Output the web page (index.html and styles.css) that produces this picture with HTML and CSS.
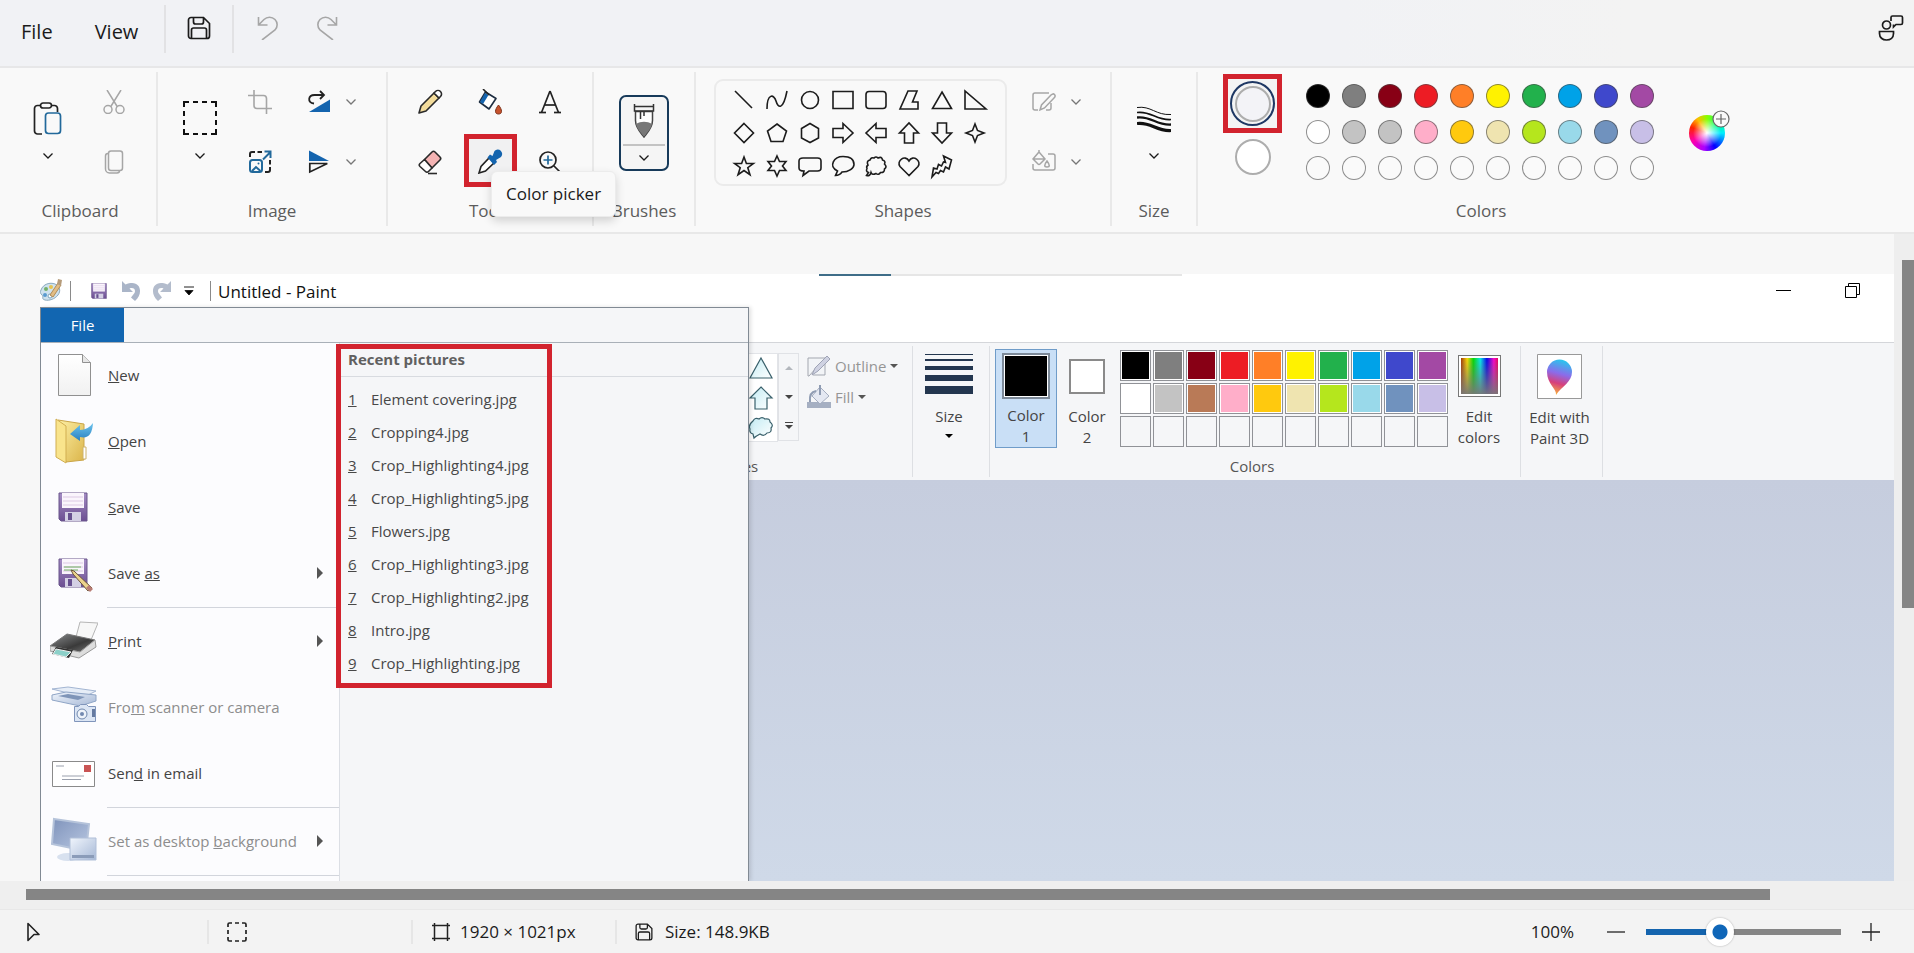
FILE: index.html
```html
<!DOCTYPE html>
<html lang="en">
<head>
<meta charset="utf-8">
<title>Paint</title>
<meta name="viewport" content="width=device-width, initial-scale=1">
<link rel="stylesheet" href="styles.css">
</head>
<body>
<svg class="defs" aria-hidden="true">
  <defs>
    <symbol id="chev" viewBox="0 0 12 8"><path d="M1.5 1.5 6 6l4.5-4.5" fill="none" stroke="currentColor" stroke-width="1.3"/></symbol>
    <symbol id="floppy" viewBox="0 0 24 24"><path d="M4 1.500h12.500L22.500 7.500V20a2.500 2.500 0 0 1-2.500 2.500H4A2.500 2.500 0 0 1 1.500 20V4A2.500 2.500 0 0 1 4 1.500zM6.500 2v4a2 2 0 0 0 2 2h6a2 2 0 0 0 2-2V2M4.500 22v-8a2 2 0 0 1 2-2h11a2 2 0 0 1 2 2v8" fill="none" stroke="currentColor" stroke-width="1.700"/></symbol>
    <linearGradient id="aqua" x1="0" y1="0" x2="1" y2="1"><stop offset="0" stop-color="#c2ebf3"/><stop offset="1" stop-color="#fff"/></linearGradient>
    <linearGradient id="paper" x1="0" y1="0" x2="0" y2="1"><stop offset="0" stop-color="#fff"/><stop offset="1" stop-color="#f1f1f1"/></linearGradient>
    <linearGradient id="gold" x1="0" y1="0" x2="1" y2="1"><stop offset="0" stop-color="#fdf0a6"/><stop offset="1" stop-color="#dbb54a"/></linearGradient>
    <linearGradient id="ink" x1="0" y1="0" x2="1" y2="1"><stop offset="0" stop-color="#8a8c8e"/><stop offset=".6" stop-color="#3a3a3a"/><stop offset="1" stop-color="#777"/></linearGradient>
    <linearGradient id="frost" x1="0" y1="0" x2="1" y2="1"><stop offset="0" stop-color="#f0f5fc"/><stop offset="1" stop-color="#a6b8d6"/></linearGradient>
    <linearGradient id="screen" x1="0" y1="0" x2="1" y2="1"><stop offset="0" stop-color="#7f93bb"/><stop offset="1" stop-color="#b9c8e2"/></linearGradient>
    <linearGradient id="disk" x1="0" y1="0" x2="0" y2="1"><stop offset="0" stop-color="#a48cc4"/><stop offset="1" stop-color="#6c4f92"/></linearGradient>
    <linearGradient id="sky" x1="0" y1="0" x2="0" y2="1"><stop offset="0" stop-color="#6cc4ee"/><stop offset="1" stop-color="#2a7fc0"/></linearGradient>
    <linearGradient id="balloon" x1=".6" y1="0" x2=".4" y2="1"><stop offset="0" stop-color="#25c8ee"/><stop offset=".4" stop-color="#8b6cea"/><stop offset=".68" stop-color="#d6407c"/><stop offset="1" stop-color="#f8b43c"/></linearGradient>
    <symbol id="disk-art" viewBox="0 0 30 30"><path d="M1 1h28v28H3l-2-2z" fill="url(#disk)" stroke="#6b568c"/><path d="M4 1h22v15H4z" fill="#faf5fc"/><path d="M5 5h20M5 9h20M5 13h20" stroke="#dcc9e4"/><path d="M7 20h16v9H7z" fill="#d4d0e4"/><path d="M10 21h4v7h-4z" fill="#67508f"/></symbol>
  </defs>
</svg>
<div class="app">
  <header class="titlebar">
    <nav class="menus"><button>File</button><button>View</button></nav>
    <div class="quick">
      <button aria-label="Save"><svg class="i24" viewBox="0 0 24 24"><use href="#floppy"/></svg></button>
      <button class="faint wide" aria-label="Undo"><svg class="i24" viewBox="0 0 24 24"><path d="M2.500 1v8h9M2.500 9l5.500-5.500a7.800 7.800 0 0 1 11 0 7.500 7.500 0 0 1 0 10.500L6 24" fill="none" stroke="currentColor" stroke-width="1.600"/></svg></button>
      <button class="faint" aria-label="Redo"><svg class="i24" viewBox="0 0 24 24"><path d="M21.500 1v8h-9M21.500 9 16 3.500a7.800 7.800 0 0 0-11 0A7.500 7.500 0 0 0 5 14L18 24" fill="none" stroke="currentColor" stroke-width="1.600"/></svg></button>
    </div>
    <button class="feedback" aria-label="Feedback"><svg class="i26" viewBox="0 0 26 26" fill="none" stroke="currentColor" stroke-width="1.700"><circle cx="8.500" cy="10" r="4"/><path d="M1.500 16.500h14v2c0 4-3 6.500-7 6.500s-7-2.500-7-6.500zM13 6V2.500Q13 1 14.500 1H23q1.500 0 1.500 1.500V8q0 1.500-1.500 1.500h-5L15.500 12V9.500"/></svg></button>
  </header>

  <section class="ribbon">
    <div class="group g-clip">
      <div class="tools">
        <button class="big" aria-label="Paste"><svg class="i34" viewBox="0 0 34 34" fill="none" stroke="#222" stroke-width="1.700"><path d="M11 33H6.500A3 3 0 0 1 3.500 30V7.500a3 3 0 0 1 3-3H10M20 4.500h3.500a3 3 0 0 1 3 3V11"/><rect x="9.500" y="2" width="11" height="5" rx="2.500"/><rect x="14.500" y="12" width="15" height="20.500" rx="3" stroke="#22699b"/></svg><svg class="chev"><use href="#chev"/></svg></button>
        <div class="stack">
          <button class="faint" aria-label="Cut"><svg class="i24" viewBox="0 0 24 24" fill="none" stroke="currentColor" stroke-width="1.500"><path d="M5 0 15.500 17M19 0 8.500 17"/><circle cx="6" cy="19.500" r="4"/><circle cx="18" cy="19.500" r="4"/></svg></button>
          <button class="faint" aria-label="Copy"><svg class="i24" viewBox="0 0 24 24" fill="none" stroke="currentColor" stroke-width="1.500"><rect x="6.500" y="1" width="14" height="19.500" rx="2.500"/><path d="M6 3.500q-2.500 0-2.500 2.500v13a4 4 0 0 0 4 4H15q2.500 0 2.500-2.500"/></svg></button>
        </div>
      </div>
      <p class="label">Clipboard</p>
    </div>
    <div class="group g-image">
      <div class="tools">
        <button class="big" aria-label="Select"><svg class="i34" viewBox="0 0 34 34" fill="none" stroke="#111" stroke-width="2"><path d="M1 6V1h5M10 1h5M19 1h5M28 1h5v5M33 10v5M33 19v5M33 28v5h-5M24 33h-5M15 33h-5M6 33H1v-5M1 24v-5M1 15v-5"/></svg><svg class="chev"><use href="#chev"/></svg></button>
        <div class="stack">
          <button class="faint" aria-label="Crop"><svg class="i24" viewBox="0 0 24 24" fill="none" stroke="currentColor" stroke-width="1.600"><path d="M6 0v15.500q0 3 3 3H24M0 5.500h15.500q3 0 3 3V24"/></svg></button>
          <button aria-label="Resize"><svg class="i24" viewBox="0 0 24 24" fill="none" stroke="#222" stroke-width="2"><path d="M2 7V4q0-2 2-2h3M9.500 2H14M22 10v4.500M22 17v3q0 2-2 2h-3"/><g stroke="#22699b"><rect x="2" y="10" width="12" height="12" rx="2.500"/><path d="m4 21 4-4 4.500 4M15 9.500l7-7M16.500 1.500H22.500V8" /></g><circle cx="10.500" cy="13.500" r="1" fill="#22699b" stroke="none"/></svg></button>
        </div>
        <div class="stack pairs">
          <button aria-label="Rotate"><svg class="i24" viewBox="0 0 24 24"><path d="M7 13.500C0 12.500 1 5 7.500 5H17M13 1l4 4-4 4" fill="none" stroke="#222" stroke-width="1.800"/><path d="M23 9.500v12.500H2z" fill="#1464ae"/></svg><svg class="chev pale"><use href="#chev"/></svg></button>
          <button aria-label="Flip"><svg class="i24" viewBox="0 0 24 24"><path d="M2 .5v10.500h20z" fill="#1464ae"/><path d="M2.800 13.500h17.500L2.800 22z" fill="none" stroke="#222" stroke-width="1.700"/></svg><svg class="chev pale"><use href="#chev"/></svg></button>
        </div>
      </div>
      <p class="label">Image</p>
    </div>
    <div class="group g-tools">
      <div class="tools tool-grid">
        <button aria-label="Pencil"><svg class="i26" viewBox="0 0 26 26" stroke="#2a2a2a" stroke-width="1.600" stroke-linejoin="round"><path d="m2 24 2-7L17 4l5 5L9 22z" fill="#f3dc9b"/><path d="m17 4 1.500-1.500a3.500 3.500 0 0 1 5 5L22 9z" fill="#fff"/></svg></button>
        <button aria-label="Fill"><svg class="i26" viewBox="0 0 26 26" stroke-linejoin="round"><path d="M8.500 3 19 9.500 12 20l-9.500-7z" fill="#fff" stroke="#1d2d40" stroke-width="1.600"/><path d="m8 4-5 9 3 2 5.500-9z" fill="#1464ae"/><path d="M6 0 12 6" stroke="#222" stroke-width="1.600"/><path d="M21.500 16c4 5 4 9 0 9s-4-4 0-9z" fill="#c7532d" stroke="#7c3018"/></svg></button>
        <button aria-label="Text"><svg class="i24" viewBox="0 0 24 24" stroke="#222" stroke-width="1.700"><line x1="12" y1="1" x2="3.500" y2="22.500"/><line x1="12" y1="1" x2="20.500" y2="22.500"/><line x1="6.500" y1="15" x2="17.500" y2="15"/><line x1="1" y1="22.500" x2="8" y2="22.500"/><line x1="16" y1="22.500" x2="23" y2="22.500"/></svg></button>
        <button aria-label="Eraser"><svg class="i26" viewBox="0 0 26 26" stroke="#2a2a2a" stroke-width="1.600" stroke-linejoin="round"><path d="M7.500 10.500 15 3q1.500-1.500 3 0l5 5q1.500 1.500 0 3l-8 8z" fill="#f4b3b3"/><path d="m7.500 10.500 7.500 8.500-3.500 3.500q-1.500 1.500-3 0l-5.500-5q-1.500-1.500 0-3z" fill="#fff"/><path d="M11 24.500h9"/></svg></button>
        <button class="picked" aria-label="Color picker" aria-describedby="tip"><svg class="i26" viewBox="0 0 26 26"><path d="m13 9 5 5-9.500 9L2 25l2-6.500z" fill="#fff" stroke="#222" stroke-width="1.600"/><path d="m10.500 9.500 2.500-3 2.500 1.500 2-5A4.300 4.300 0 0 1 24 9l-5 3 1 2-3 3z" fill="#1464ae"/></svg></button>
        <button aria-label="Magnifier"><svg class="i24" viewBox="0 0 24 24" fill="none" stroke="#222" stroke-width="1.700"><circle cx="10" cy="10" r="8"/><path d="m16 16 6.500 6.500"/><path d="M10 5.500v9M5.500 10h9" stroke="#22699b"/></svg></button>
      </div>
      <p class="label">Tools</p>
      <div class="tip" id="tip" role="tooltip">Color picker</div>
    </div>
    <div class="group g-brush">
      <div class="tools">
        <button class="brush" aria-label="Brushes"><svg class="brush-art" viewBox="0 0 22 34"><path d="M2.500 7.500v9C2.500 24 8 29 11 33c3-4 8.500-9 8.500-16.500v-9z" fill="#fff" stroke="#444" stroke-width="1.500"/><path d="M3 20c5-3 11-3 16 0-1 5-5 9-8 12.500C8 29 4 25 3 20z" fill="#777"/><path d="M1.500 0v7h19V0M1.500 2.500h19M7.500 8v7M11 8v4" fill="none" stroke="#333" stroke-width="1.500"/></svg><span class="rule"></span><svg class="chev"><use href="#chev"/></svg></button>
      </div>
      <p class="label">Brushes</p>
    </div>
    <div class="group g-shapes">
      <div class="tools">
        <div class="shapes">
          <button aria-label="Line"><svg viewBox="0 0 22 22"><path d="m2 2 17 17"/></svg></button>
          <button aria-label="Curve"><svg viewBox="0 0 22 22"><path d="M1 20C1 4 8 5 10 12s7 10 11-10"/></svg></button>
          <button aria-label="Oval"><svg viewBox="0 0 22 22"><circle cx="11" cy="11" r="8.500"/></svg></button>
          <button aria-label="Rectangle"><svg viewBox="0 0 22 22"><path d="M1 2.500h20v17H1z"/></svg></button>
          <button aria-label="Rounded rectangle"><svg viewBox="0 0 22 22"><rect x="1" y="2.500" width="20" height="17" rx="3"/></svg></button>
          <button aria-label="Polygon"><svg viewBox="0 0 22 22"><path d="M10 2h9l-4.500 11H20v7H2z"/></svg></button>
          <button aria-label="Triangle"><svg viewBox="0 0 22 22"><path d="m11 3 9.500 16.500h-19z"/></svg></button>
          <button aria-label="Right triangle"><svg viewBox="0 0 22 22"><path d="M1 2v18h21z"/></svg></button>
          <button aria-label="Diamond"><svg viewBox="0 0 22 22"><path d="m11 1.500 9.500 9.500-9.500 9.500L1.500 11z"/></svg></button>
          <button aria-label="Pentagon"><svg viewBox="0 0 22 22"><path d="m11 2 9.500 7L17 19.500H5L1.500 9z"/></svg></button>
          <button aria-label="Hexagon"><svg viewBox="0 0 22 22"><path d="m11 1.500 8.500 5v9.500L11 20.500 2.500 16V6.500z"/></svg></button>
          <button aria-label="Right arrow"><svg viewBox="0 0 22 22"><path d="M1 6.500h10v-5L21 11l-10 9.500v-5H1z"/></svg></button>
          <button aria-label="Left arrow"><svg viewBox="0 0 22 22"><path d="M21 6.500H11v-5L1 11l10 9.500v-5h10z"/></svg></button>
          <button aria-label="Up arrow"><svg viewBox="0 0 22 22"><path d="M6.500 21V11h-5L11 1l9.500 10h-5v10z"/></svg></button>
          <button aria-label="Down arrow"><svg viewBox="0 0 22 22"><path d="M6.500 1v10h-5L11 21l9.500-10h-5V1z"/></svg></button>
          <button aria-label="Four-point star"><svg viewBox="0 0 22 22"><path d="m11 2 2.500 6.500L20 11l-6.500 2.500L11 20l-2.500-6.500L2 11l6.500-2.500z"/></svg></button>
          <button aria-label="Five-point star"><svg viewBox="0 0 22 22"><path d="m11 2 2.400 6.500h7l-5.600 4.200 2.200 7L11 15.500l-6 4.200 2.200-7L1.600 8.500h7z"/></svg></button>
          <button aria-label="Six-point star"><svg viewBox="0 0 22 22"><path d="m11 1 2.500 5.500h6.500L16.500 11l3.500 4.500h-6.500L11 21l-2.500-5.500H2L5.500 11 2 6.500h6.500z"/></svg></button>
          <button aria-label="Rounded callout"><svg viewBox="0 0 22 22"><path d="M4 3h14.500Q22 3 22 6v7q0 3-3.500 3H10l-6 4.500 1-4.500Q0 16 0 13V6q0-3 4-3z"/></svg></button>
          <button aria-label="Oval callout"><svg viewBox="0 0 22 22"><path d="M5.500 16C-4 11 2 1.500 11 1.500S22 6 22 9.500 17 17 10 17q-2.500 3.500-6.500 3.500z"/></svg></button>
          <button aria-label="Cloud callout"><svg viewBox="0 0 22 22"><path d="M5 5q1-3 4-2 2-2 4 0 4-2 4.500 2 3.500 1 2 4 3 3 0 5 0 4-4 3.500-2 3-4.500 1-4 2-5-1-1 4-4.500 3l2-3q-3-1-1.500-4-1-2 1-3.500Q1 6 5 5z"/></svg></button>
          <button aria-label="Heart"><svg viewBox="0 0 22 22"><path d="M11 20.500 2 11.500C-2 6 7-1 11 6c4-7 13 0 9 5.500z"/></svg></button>
          <button aria-label="Lightning"><svg viewBox="0 0 22 22"><path d="m12.500 1 8 4-2.500 9-3.500-2-2 5-3-1.500-2 3-2.500-1L1 22l1.500-9 3.500 1 1.500-4.500 3 1.500L12.500 7l2 .5z"/></svg></button>
        </div>
        <div class="stack pairs faint">
          <button aria-label="Shape outline"><svg class="i24" viewBox="0 0 24 24" fill="none" stroke="currentColor" stroke-width="1.500"><path d="M17 3H3Q1 3 1 5v13q0 2 2 2h3M19 13v5q0 2-2 2h-3M8 20l1.500-5L19 5q2-2 3.500-.5T22 8l-9.500 10z"/></svg><svg class="chev pale"><use href="#chev"/></svg></button>
          <button aria-label="Shape fill"><svg class="i24" viewBox="0 0 24 24" fill="none" stroke="currentColor" stroke-width="1.500"><path d="M16 4h5q2 0 2 2v12q0 2-2 2H3q-2 0-2-2v-4M7 2l6 7-5 5q-1 1-2 0L1 9zM1.500 9H13M7 2V0"/><path d="M15 11c3 4 3 6 0 6s-3-2 0-6z"/></svg><svg class="chev pale"><use href="#chev"/></svg></button>
        </div>
      </div>
      <p class="label">Shapes</p>
    </div>
    <div class="group g-size">
      <div class="tools"><button class="big" aria-label="Size"><svg class="i34" viewBox="0 0 34 34" fill="none" stroke="#111"><path d="M0 6.500c14-2 19 8 34 7" stroke-width="1"/><path d="M0 11.500c14-2 19 8 34 7" stroke-width="1.700"/><path d="M0 16.500c14-2 19 8 34 7" stroke-width="2.300"/><path d="M0 22.500c14-2 19 8 34 7" stroke-width="3.200"/></svg><svg class="chev"><use href="#chev"/></svg></button></div>
      <p class="label">Size</p>
    </div>
    <div class="group g-colors">
      <div class="tools">
        <div class="wells">
          <div class="mark"><button class="ring" aria-label="Color 1"><span class="well one"></span></button></div>
          <button class="well" aria-label="Color 2"></button>
        </div>
        <div class="palette round">
          <button style="--c:#000" aria-label="Black"></button><button style="--c:#7f7f7f" aria-label="Gray"></button><button style="--c:#880015" aria-label="Dark red"></button><button style="--c:#ed1c24" aria-label="Red"></button><button style="--c:#ff7f27" aria-label="Orange"></button><button style="--c:#fff200" aria-label="Yellow"></button><button style="--c:#22b14c" aria-label="Green"></button><button style="--c:#00a2e8" aria-label="Turquoise"></button><button style="--c:#3f48cc" aria-label="Indigo"></button><button style="--c:#a349a4" aria-label="Purple"></button>
          <button style="--c:#fff" aria-label="White"></button><button style="--c:#c3c3c3" aria-label="Light gray"></button><button style="--c:#c3c3c3" aria-label="Silver"></button><button style="--c:#ffaec9" aria-label="Rose"></button><button style="--c:#ffc90e" aria-label="Gold"></button><button style="--c:#efe4b0" aria-label="Light yellow"></button><button style="--c:#b5e61d" aria-label="Lime"></button><button style="--c:#99d9ea" aria-label="Light turquoise"></button><button style="--c:#7092be" aria-label="Blue gray"></button><button style="--c:#c8bfe7" aria-label="Lavender"></button>
          <button aria-label="Custom 1"></button><button aria-label="Custom 2"></button><button aria-label="Custom 3"></button><button aria-label="Custom 4"></button><button aria-label="Custom 5"></button><button aria-label="Custom 6"></button><button aria-label="Custom 7"></button><button aria-label="Custom 8"></button><button aria-label="Custom 9"></button><button aria-label="Custom 10"></button>
        </div>
        <button class="wheel" aria-label="Edit colors"><svg class="plus" viewBox="0 0 18 18" fill="#fafafa" stroke="#666" stroke-width="1.200"><circle cx="9" cy="9" r="8"/><path d="M9 4v10M4 9h10"/></svg></button>
      </div>
      <p class="label">Colors</p>
    </div>
  </section>

  <main class="stage">
    <div class="canvas">
      <div class="old-title">
        <svg class="i26" viewBox="0 0 26 26"><path d="M3 12C5 6 12 4 17 6s6 7 3 11-9 6-13 5-1-3-3-5-2-3-1-5z" fill="#cfe2ee" stroke="#8aa9bd"/><circle cx="8" cy="11" r="2" fill="#74b06a"/><circle cx="13" cy="9" r="2" fill="#e6c34f"/><circle cx="7" cy="17" r="2" fill="#5a9bd0"/><circle cx="12" cy="18" r="2" fill="#fff" stroke="#7ba3bd"/><path d="m12 17 8-12 3 2-8 12z" fill="#e2bd84" stroke="#b08b57"/><path d="m19 6 1-5 4 1-1 6z" fill="#b69c7b"/></svg>
        <i class="bar"></i>
        <svg class="i16" viewBox="0 0 30 30"><use href="#disk-art"/></svg>
        <svg class="i20" viewBox="0 0 20 20"><path d="M1 0v11h11L8.500 7.500C13 6 15 9 13.500 12L10 16.500l4 3.500C23 13 20-3 4.500 3.500z" fill="#aab5c8"/></svg>
        <svg class="i20" viewBox="0 0 20 20"><path d="M19 0v11H8l3.500-3.500C7 6 5 9 6.500 12l3.500 4.500L6 20C-3 13 0-3 15.500 3.500z" fill="#b3bccc"/></svg>
        <svg class="i10" viewBox="0 0 10 10"><path d="M0 1h10M1 4.500h8L5 9z" stroke="#222"/></svg>
        <i class="bar"></i>
        <span>Untitled - Paint</span>
        <i class="progress"></i>
        <span class="winbtns">
          <button aria-label="Minimize"><svg class="i16" viewBox="0 0 16 16"><path d="M0 7.500h15" stroke="#000" fill="none"/></svg></button>
          <button aria-label="Restore"><svg class="i16" viewBox="0 0 16 16"><path d="M.5 3.500h11v11H.5zM3.500 3.500v-3h11v11h-3" stroke="#000" fill="none"/></svg></button>
        </span>
      </div>
      <div class="old-ribbon">
        <div class="og og-shapes">
          <div class="og-row">
            <div class="gallery">
              <svg class="i26" viewBox="0 0 26 26"><path d="m13 3 11 20H2z"/></svg>
              <svg class="i26" viewBox="0 0 26 26"><path d="m13 2 11 11h-5v11H7V13H2z"/></svg>
              <svg class="i26" viewBox="0 0 26 26"><path d="M5 6q2-4 6-2 3-3 6 0 5-1 5 3 4 3 1 6 1 5-4 5-3 4-7 1-4 2-6 4l-1-4q-4-1-3-5-2-4 3-8z"/></svg>
            </div>
            <div class="gal-bar"><svg viewBox="0 0 8 8"><path d="M0 6h8L4 2z" fill="#b3b7bd"/></svg><svg viewBox="0 0 8 8"><path d="M0 2h8L4 6z" fill="#444"/></svg><svg viewBox="0 0 8 8"><path d="M0 0h8v1H0zM0 3h8L4 7z" fill="#444"/></svg></div>
            <div class="og-list">
              <button><svg class="i24" viewBox="0 0 24 24"><path d="M1 4h17L2 22H1zM18 5v16H6" fill="#f2f4f7" stroke="#a3a7b0"/><path d="m5 21 3-7L20 2l3 3L11 17z" fill="#cfd2e2" stroke="#9ea3b5"/></svg>Outline<svg class="tri" viewBox="0 0 8 8"><path d="M0 2h8L4 6z" fill="currentColor"/></svg></button>
              <button><svg class="i24" viewBox="0 0 24 24"><path d="M0 17h24v6H0z" fill="#a5afc2"/><path d="m13 2 9 9-9 8-8-8z" fill="#e4e8f2" stroke="#a4adc0"/><path d="M13 0v10M9 6Q2 7 3 17" fill="none" stroke="#8f9cb3" stroke-width="2"/></svg>Fill<svg class="tri" viewBox="0 0 8 8"><path d="M0 2h8L4 6z" fill="currentColor"/></svg></button>
            </div>
          </div>
          <p class="og-label">Shapes</p>
        </div>
        <div class="og og-size">
          <button class="stacked"><svg class="lines" viewBox="0 0 48 44"><path d="M0 2h48v1H0zM0 7h48v2H0zM0 14h48v4H0zM0 23h48v6H0zM0 34h48v8H0z" fill="#23364f"/></svg><span>Size</span><svg class="tri" viewBox="0 0 8 8"><path d="M0 2h8L4 6z" fill="#000"/></svg></button>
        </div>
        <div class="og og-colors">
          <div class="og-row">
            <button class="stacked color-one"><i class="sw black"></i><span>Color<br>1</span></button>
            <button class="stacked color-two"><i class="sw"></i><span>Color<br>2</span></button>
            <div class="palette square">
              <button style="--c:#000" aria-label="Black"></button><button style="--c:#7f7f7f" aria-label="Gray"></button><button style="--c:#880015" aria-label="Dark red"></button><button style="--c:#ed1c24" aria-label="Red"></button><button style="--c:#ff7f27" aria-label="Orange"></button><button style="--c:#fff200" aria-label="Yellow"></button><button style="--c:#22b14c" aria-label="Green"></button><button style="--c:#00a2e8" aria-label="Turquoise"></button><button style="--c:#3f48cc" aria-label="Indigo"></button><button style="--c:#a349a4" aria-label="Purple"></button>
              <button style="--c:#fff" aria-label="White"></button><button style="--c:#c3c3c3" aria-label="Light gray"></button><button style="--c:#b97a57" aria-label="Brown"></button><button style="--c:#ffaec9" aria-label="Rose"></button><button style="--c:#ffc90e" aria-label="Gold"></button><button style="--c:#efe4b0" aria-label="Light yellow"></button><button style="--c:#b5e61d" aria-label="Lime"></button><button style="--c:#99d9ea" aria-label="Light turquoise"></button><button style="--c:#7092be" aria-label="Blue gray"></button><button style="--c:#c8bfe7" aria-label="Lavender"></button>
              <button class="empty" aria-label="Custom 1"></button><button class="empty" aria-label="Custom 2"></button><button class="empty" aria-label="Custom 3"></button><button class="empty" aria-label="Custom 4"></button><button class="empty" aria-label="Custom 5"></button><button class="empty" aria-label="Custom 6"></button><button class="empty" aria-label="Custom 7"></button><button class="empty" aria-label="Custom 8"></button><button class="empty" aria-label="Custom 9"></button><button class="empty" aria-label="Custom 10"></button>
            </div>
            <button class="stacked edit"><i class="spectrum"></i><span>Edit<br>colors</span></button>
          </div>
          <p class="og-label">Colors</p>
        </div>
        <div class="og og-3d">
          <button class="stacked"><svg class="balloon" viewBox="0 0 45 45"><path d="M.5.5h44v44H.5z" fill="#fff" stroke="#999"/><path d="M19 41c1-6-9-11-9-23a12.500 12.500 0 0 1 25 0c0 10-10 14-16 23z" fill="url(#balloon)"/></svg><span>Edit with<br>Paint 3D</span></button>
        </div>
      </div>
      <div class="old-work"></div>

      <div class="filemenu">
        <div class="tabs"><button class="filetab">File</button></div>
        <div class="panes">
          <div class="left">
            <button><svg class="art" viewBox="0 0 48 48"><path d="M8.500 3.500h24l8 8v33h-32z" fill="url(#paper)" stroke="#909090"/><path d="M32.500 3.500v8h8" fill="#e6e6e6" stroke="#909090"/></svg><span><u>N</u>ew</span></button>
            <button><svg class="art" viewBox="0 0 48 48"><path d="m8 3 26 4v36l-18 2z" fill="url(#gold)" stroke="#caa548"/><path d="m6 2 10 7v37L6 40z" fill="#f9e48c" stroke="#d1ae51"/><path d="M33 30h3v12h-3z" fill="#fff" stroke="#ccb26c"/><path d="m20 17 10-9v5q8 0 13-7-1 17-13 14v4z" fill="url(#sky)"/></svg><span><u>O</u>pen</span></button>
            <button><svg class="art" viewBox="0 0 48 48"><use href="#disk-art" x="8" y="9" width="30" height="30"/></svg><span><u>S</u>ave</span></button>
            <button><svg class="art" viewBox="0 0 48 48"><use href="#disk-art" x="8" y="9" width="30" height="30"/><path d="M14 18h17M14 21h14" stroke="#70b060"/><path d="m21 21 3 1 18 17-4 3-15-17z" fill="#ecd38c" stroke="#6a543a"/><path d="m39 36 4 4-3 3-4-4z" fill="#b87c74"/></svg><span>Save <u>as</u></span><i class="more"></i></button>
            <hr>
            <button><svg class="art" viewBox="0 0 48 48"><path d="m26 20 4-15 18 1-7 17z" fill="#f7f7f7" stroke="#b5b5b5"/><path d="m17 17 28 6-15 12L0 29z" fill="url(#ink)" stroke="#777"/><path d="m0 29 30 6 15-12 1 7-17 11L0 34z" fill="#ddd" stroke="#999"/><path d="m6 30 17 3-4 8-17-4z" fill="#333"/><path d="m6 32 15 3-5 5-13-3z" fill="#8cd0c9" stroke="#eee"/></svg><span><u>P</u>rint</span><i class="more"></i></button>
            <button class="off"><svg class="art" viewBox="0 0 48 48"><path d="m2 6 16-2 28 4-12 6z" fill="#e6edf7" stroke="#a3b5d2"/><path d="m2 12 14-3 30 3v6l-16 5L2 17z" fill="url(#frost)" stroke="#8fa5c6"/><path d="m8 13 10-2 17 3-7 3z" fill="#7f95b8"/><path d="M24.500 23.500h4l2-2h6l2 2h7v15h-21z" fill="#dbe5f4" stroke="#8095bb"/><circle cx="32" cy="31" r="5" fill="#eef3fa" stroke="#6f87ad"/><circle cx="32" cy="31" r="2" fill="#7289b0"/><path d="M42 26h3v8h-3z" fill="#657aa0"/></svg><span>Fro<u>m</u> scanner or camera</span></button>
            <button><svg class="art" viewBox="0 0 48 48"><path d="M2.500 12.500h42v25h-42z" fill="#fff" stroke="#8a8a8a"/><path d="M6 17h8M12 27h22M12 30.500h19" stroke="#9aa0ad"/><path d="M34 16h7v7h-7z" fill="#c95454"/></svg><span>Sen<u>d</u> in email</span></button>
            <hr>
            <button class="off"><svg class="art" viewBox="0 0 48 48"><path d="m4 2 35 5-3 27-34-7z" fill="url(#screen)" stroke="#b5c3da" stroke-width="2"/><ellipse cx="18" cy="40" rx="11" ry="4" fill="#d8e1ef"/><path d="M20 21h26v22H20z" fill="url(#frost)" stroke="#b0bfd8"/><path d="M22 38h22v3H22z" fill="#8b9cb9"/></svg><span>Set as desktop <u>b</u>ackground</span><i class="more"></i></button>
            <hr>
          </div>
          <div class="right">
            <div class="recent">
              <h2>Recent pictures</h2>
              <a href="#"><u>1</u>Element covering.jpg</a>
              <a href="#"><u>2</u>Cropping4.jpg</a>
              <a href="#"><u>3</u>Crop_Highlighting4.jpg</a>
              <a href="#"><u>4</u>Crop_Highlighting5.jpg</a>
              <a href="#"><u>5</u>Flowers.jpg</a>
              <a href="#"><u>6</u>Crop_Highlighting3.jpg</a>
              <a href="#"><u>7</u>Crop_Highlighting2.jpg</a>
              <a href="#"><u>8</u>Intro.jpg</a>
              <a href="#"><u>9</u>Crop_Highlighting.jpg</a>
            </div>
          </div>
        </div>
      </div>
    </div>
    <div class="vtrack"><div class="vthumb"></div></div>
  </main>
  <div class="htrack"><div class="hthumb"></div></div>

  <footer class="status">
    <div class="cell"><svg class="i20" viewBox="0 0 20 20" fill="none" stroke="#222" stroke-width="1.600"><path d="M3 1.500 14 12.500H9l-6 6z" stroke-linejoin="round"/></svg></div>
    <div class="cell"><svg class="i20" viewBox="0 0 20 20" fill="none" stroke="#222" stroke-width="1.700"><path d="M1 5V2.500Q1 1 2.500 1H5M8 1h4M15 1h2.500Q19 1 19 2.500V5M19 8v4M19 15v2.500q0 1.500-1.500 1.500H15M12 19H8M5 19H2.500Q1 19 1 17.500V15M1 12V8"/></svg></div>
    <div class="cell"><svg class="i20" viewBox="0 0 20 20" fill="none" stroke="#222" stroke-width="1.500"><path d="M3.500 1v18M16.500 1v18M1 3.500h18M1 16.500h18"/></svg><span>1920 × 1021px</span></div>
    <div class="cell"><svg class="i18" viewBox="0 0 24 24"><use href="#floppy"/></svg><span>Size: 148.9KB</span></div>
    <div class="zoom">
      <label for="zoom">100%</label>
      <button aria-label="Zoom out"><svg class="i18" viewBox="0 0 18 18"><path d="M0 9h18" stroke="#222" stroke-width="1.300"/></svg></button>
      <input id="zoom" type="range" min="0" max="100" value="36">
      <button aria-label="Zoom in"><svg class="i18" viewBox="0 0 18 18"><path d="M0 9h18M9 0v18" stroke="#222" stroke-width="1.300"/></svg></button>
    </div>
  </footer>
</div>
</body>
</html>
```
FILE: styles.css
```css
* { box-sizing: border-box; }
body { margin: 0; font-family: "Open Sans", "Noto Sans", sans-serif; font-size: 17px; color: #1b1b1b; }
button { margin: 0; padding: 0; border: 0; background: none; font: inherit; color: inherit; display: flex; align-items: center; justify-content: center; }
p, h2 { margin: 0; }
svg { display: block; flex: none; }
.defs { position: absolute; width: 0; height: 0; }
.i10 { width: 10px; height: 10px; }
.i16 { width: 16px; height: 16px; }
.i18 { width: 18px; height: 18px; }
.i20 { width: 20px; height: 20px; }
.i24 { width: 24px; height: 24px; }
.i26 { width: 26px; height: 26px; }
.i34 { width: 34px; height: 34px; }
.chev { width: 12px; height: 8px; }
.pale { color: #777; }
.faint { color: #a6a6a6; }

.app { display: flex; flex-direction: column; height: 100vh; overflow: hidden; background: #f8f8f8; }

/* title bar */
.titlebar { display: flex; align-items: flex-start; flex: none; height: 68px; background: linear-gradient(90deg, #f1f2f5 70%, #f3f3f3 85%); border-bottom: 2px solid #e7e7e8; }
.menus { display: flex; height: 62px; gap: 42px; padding: 0 26px 0 21px; font-size: 20px; }
.quick { display: flex; height: 56px; }
.quick button { width: 50px; }
.quick button:first-child { width: 70px; height: 48px; margin-top: 5px; border: solid #e2e2e4; border-width: 0 2px; padding-bottom: 2px; }
.quick .wide { width: 68px; }
.feedback { margin-left: auto; height: 56px; padding-right: 10px; }

/* ribbon */
.ribbon { display: flex; flex: none; height: 166px; padding-top: 4px; background: #f9f9f9; border-bottom: 2px solid #e8e8e8; }
.group { display: flex; flex-direction: column; position: relative; height: 154px; border-right: 2px solid #e9e9e9; }
.tools { display: flex; height: 120px; }
.label { flex: 1; padding-top: 6px; line-height: 26px; text-align: center; color: #5c5c5c; }
.stack { display: flex; flex-direction: column; }
.stack button { width: 60px; height: 60px; }
.pairs button { width: 76px; gap: 14px; }
.big { flex-direction: column; gap: 17px; padding-top: 12px; width: 66px; height: 104px; }
.g-clip { width: 158px; }
.g-clip .tools { padding-left: 15px; }
.g-clip .stack { margin-left: 3px; }
.g-clip .label { padding-left: 4px; }
.g-image { width: 230px; }
.g-image .tools { padding-left: 9px; }
.g-image .big { margin-right: -3px; }
.g-image .pairs { margin-left: 4px; }
.g-tools { width: 206px; }
.tool-grid { display: grid; grid-template: 60px 60px / repeat(3, 60px); padding-left: 12px; }
.tool-grid button { width: 60px; height: 60px; }
.tool-grid .picked { width: 53px; height: 53px; margin: 2px 0 0 4px; padding-right: 2px; border: 5px solid #d2232e; background: #f1f1f2; }
.tip { position: absolute; left: 103px; top: 99px; z-index: 3; padding: 0 14px; line-height: 44px; white-space: nowrap; background: #f9f9f9; border: 1px solid #ececec; border-radius: 6px; box-shadow: 0 4px 10px rgba(0,0,0,.16); }
.g-brush { width: 102px; align-items: center; }
.brush { flex-direction: column; align-self: flex-start; width: 50px; height: 76px; margin-top: 23px; border: 2px solid #173a5a; border-radius: 7px; background: #f5f5f5; }
.brush-art { width: 22px; height: 34px; }
.rule { width: 42px; height: 2px; margin: 6px 0 8px; background: #c3c3c3; }
.g-shapes { width: 416px; }
.g-shapes .tools { padding-left: 18px; }
.shapes { display: grid; grid-template-columns: repeat(8, 33px); grid-auto-rows: 33px; align-self: flex-start; margin: 7px 12px 0 0; padding: 2px 14px 2px 11px; border: 2px solid #ebebeb; border-radius: 9px; }
.shapes button { width: 33px; height: 33px; }
.shapes svg { width: 22px; height: 22px; overflow: visible; fill: none; stroke: #1c1c1c; stroke-width: 1.6; }
.g-size { width: 86px; align-items: center; }
.g-colors { flex: 0 1 566px; border: 0; }
.g-colors .tools { padding-left: 25px; }
.wells { display: flex; flex-direction: column; align-items: center; gap: 6px; padding-top: 2px; }
.mark { border: 5px solid #d2232e; padding: 2px; background: #f4f4f4; }
.ring { width: 45px; height: 45px; border: 2px solid #1f3864; border-radius: 50%; }
.well { width: 36px; height: 36px; border: 2px solid #adadad; border-radius: 50%; background: #fff; }
.one { background: #f3f3f7; }
.palette { display: grid; }
.round { grid-template: repeat(3, 36px) / repeat(10, 36px); place-items: center; margin: 6px 0 0 18px; }
.round button { width: 24px; height: 24px; border: 1px solid rgba(70,70,70,.6); border-radius: 50%; background: var(--c, #fafafa); }
.wheel { position: relative; width: 36px; height: 36px; margin: 43px 0 0 29px; border-radius: 50%; background: radial-gradient(circle, #fff, transparent 55%), conic-gradient(#8f0, #0f8 50deg, #0ef 90deg, #00f 150deg, #a0f 190deg, #f0a 240deg, #f20 290deg, #fb0 325deg, #8f0); }
.plus { position: absolute; right: -5px; top: -5px; width: 18px; height: 18px; }

/* document area */
.stage { display: flex; flex: 1; min-height: 0; padding-left: 40px; background: #f7f7f7; }
.canvas { display: flex; flex-direction: column; flex: 1; position: relative; margin-top: 40px; overflow: hidden; background: #fff; font-size: 15px; color: #444; }
.vtrack { width: 20px; padding: 26px 0 0 8px; background: #eee; }
.vthumb { height: 56%; background: #858585; }
.htrack { flex: none; height: 28px; padding: 8px 144px 0 26px; background: #efefef; }
.hthumb { height: 11px; background: #858585; }

.old-title { display: flex; align-items: center; flex: none; height: 68px; padding: 0 33px 34px 0; position: relative; font-size: 17px; color: #111; white-space: nowrap; }
.old-title > .i26 { margin-left: -2px; }
.bar { width: 1px; height: 20px; background: #8a8a8a; margin-left: 6px; }
.old-title .i16 { margin-left: 20px; }
.old-title .i20 { margin-left: 14px; }
.old-title .i20 + .i20 { margin-left: 11px; }
.old-title .i10 { margin-left: 12px; }
.old-title .i10 + .bar { margin: 0 7px 0 16px; }
.progress { position: absolute; top: 0; left: 42%; width: 363px; height: 2px; background: linear-gradient(90deg, #3f6d88 72px, #e6e6e6 72px); }
.winbtns { display: flex; gap: 53px; margin-left: auto; }
.old-title .winbtns .i16 { margin: 0; }

.old-ribbon { display: flex; flex: none; height: 138px; padding: 3px 0; background: #f5f6f8; border-top: 1px solid #d4d6da; }
.og { display: flex; flex-direction: column; justify-content: space-between; border-right: 1px solid #dddfe3; height: 131px; }
.og-row { display: flex; }
.og-label { line-height: 22px; text-align: center; color: #555; }
.og-shapes { width: 305px; margin-left: 568px; }
.og-shapes .og-row { padding: 7px 0 0 100px; }
.og-shapes .og-label { padding-right: 54px; }
.gallery { width: 70px; padding: 1px 5px 0 39px; display: flex; flex-direction: column; gap: 4px; background: #fff; border: 1px solid #e2e4e8; }
.gallery svg { fill: url(#aqua); stroke: #39606b; stroke-width: 1.2; }
.gal-bar { display: flex; flex-direction: column; justify-content: space-around; align-items: center; width: 21px; height: 88px; border: 1px solid #e0e2e6; }
.gal-bar svg, .tri { width: 8px; height: 8px; }
.og-list { padding-left: 8px; display: flex; flex-direction: column; gap: 5px; color: #959595; }
.og-list button { justify-content: flex-start; gap: 4px; height: 26px; }
.og-list .tri { color: #555; }
.og-size { width: 77px; padding-right: 4px; }
.stacked { flex-direction: column; line-height: 21px; text-align: center; }
.og-size .stacked { padding-top: 6px; }
.lines { width: 48px; height: 44px; margin-bottom: 10px; }
.og-size .tri { margin-top: 5px; }
.og-colors { width: 531px; }
.og-colors .og-row { padding: 3px 0 0 5px; }
.og-colors .og-label { padding-right: 6px; }
.color-one { width: 62px; height: 99px; border: 1px solid #6f9cc9; background: #c9dff6; justify-content: flex-start; padding-top: 3px; }
.sw { width: 36px; height: 36px; border: 2px solid #8a8a8a; background: #fff; margin-bottom: 12px; }
.black { width: 48px; height: 48px; border: 2px solid #7d8a99; background: #000; box-shadow: inset 0 0 0 1px #fff; margin-bottom: 6px; }
.color-two { width: 60px; height: 99px; justify-content: flex-start; padding-top: 10px; }
.square { grid-template: repeat(3, 31px) / repeat(10, 31px); gap: 2px; margin: 1px 0 0 3px; }
.square button { border: 1px solid #909297; background: var(--c); box-shadow: inset 0 0 0 1px #fff; }
.square .empty { background: #f5f6f8; box-shadow: none; }
.edit { width: 60px; margin-left: 1px; height: 99px; justify-content: flex-start; padding-top: 6px; }
.spectrum { width: 43px; height: 43px; margin-bottom: 9px; border: 1px solid #777; box-shadow: inset 0 0 0 2px #fff; background: linear-gradient(transparent, #777), linear-gradient(90deg, #800, #fd0 20%, #0d0 35%, #0ee 52%, #00e 68%, #f0c 85%, #d02); }
.og-3d { width: 82px; padding-right: 4px; }
.og-3d .stacked { padding-top: 8px; white-space: nowrap; }
.balloon { width: 45px; height: 45px; margin-bottom: 8px; }
.old-work { flex: 1; background: linear-gradient(#c6cdde, #cfd9e8); }

/* file menu lying over the canvas */
.filemenu { position: absolute; left: 0; top: 33px; bottom: 0; display: flex; flex-direction: column; width: 709px; overflow: hidden; background: #f5f6f8; border: solid #818a94; border-width: 1px 1px 0; box-shadow: 2px 0 4px rgba(0,0,0,.12); }
.tabs { flex: none; height: 35px; border-bottom: 1px solid #a9b0b8; }
.filetab { width: 83px; height: 34px; background: #1266b1; color: #fff; }
.panes { display: flex; flex: 1; min-height: 0; }
.left { width: 299px; flex: none; background: #fcfcfe; border-right: 1px solid #dcdfe5; }
.left button { width: 100%; height: 66px; justify-content: flex-start; padding: 0 16px 2px 9px; }
.left .off { color: #8d8d8d; }
.left span { padding-left: 10px; white-space: nowrap; }
.art { width: 48px; height: 48px; }
.more { margin-left: auto; border: solid transparent; border-width: 6px 0 6px 6px; border-left-color: #555; }
.left hr { margin: 0 0 1px 66px; border: 0; height: 1px; background: #d2d5dc; }
.right { flex: 1; background: linear-gradient(#d8dbe0, #d8dbe0) 0 33px / 100% 1px no-repeat; }
.recent { display: flex; flex-direction: column; width: 216px; margin: 1px 0 0 -4px; padding: 0 7px 0; border: 5px solid #d2232e; height: 344px; position: relative; background: linear-gradient(#d8dbe0, #d8dbe0) 0 27px / 100% 1px no-repeat #f5f6f8; }
.recent h2 { font-size: 15px; line-height: 20px; margin-bottom: 14px; color: #606060; }
.recent a { display: flex; line-height: 33px; color: #484848; text-decoration: none; white-space: nowrap; }
.recent u { width: 23px; }

/* status bar */
.status { display: flex; align-items: center; flex: none; height: 44px; background: #f3f3f3; border-top: 1px solid #e8e8e8; }
.cell { display: flex; align-items: center; width: 204px; height: 24px; gap: 9px; padding-left: 18px; border-right: 2px solid #e6e6e6; white-space: nowrap; }
.cell:first-child { width: 209px; padding-left: 25px; }
.cell:nth-child(4) { border: 0; gap: 12px; }
.zoom { display: flex; align-items: center; margin-left: auto; padding-right: 34px; }
.zoom label { margin-right: 33px; }
.zoom input { appearance: none; width: 195px; height: 30px; margin: 0 21px; background: linear-gradient(90deg, #1464ae 38%, #858585 38%) center / 100% 6px no-repeat; border-radius: 3px; }
.zoom input::-webkit-slider-thumb { appearance: none; width: 28px; height: 28px; border: 0; border-radius: 50%; background: radial-gradient(circle, #0f66b8 7px, #fff 8px); box-shadow: 0 0 2px rgba(0,0,0,.35); }
```
